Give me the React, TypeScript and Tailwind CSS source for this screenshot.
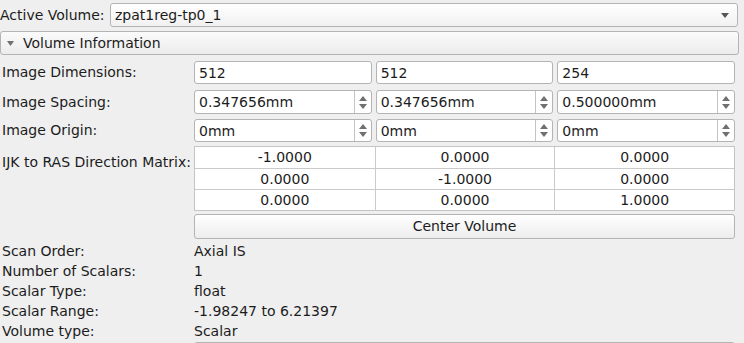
import React from 'react';

const SpinArrows = () => (
	<div className="flex h-full w-[17px] flex-col items-center justify-center gap-[3px] border-l border-[#c4c4c4]">
		<svg width="8" height="5" viewBox="0 0 8 5">
			<path d="M0 5 L4 0 L8 5 Z" fill="#707070" />
		</svg>
		<svg width="8" height="5" viewBox="0 0 8 5">
			<path d="M0 0 L4 5 L8 0 Z" fill="#707070" />
		</svg>
	</div>
);

const Field = ({ value, spin }: { value: string; spin?: boolean }) => (
	<div className="flex h-full flex-1 items-center rounded-[3px] border border-[#b4b4b4] bg-white">
		<span className="flex-1 pl-[4px] leading-none">{value}</span>
		{spin && <SpinArrows />}
	</div>
);

const FieldRow = ({
	label,
	values,
	spin,
	className,
}: {
	label: string;
	values: string[];
	spin?: boolean;
	className: string;
}) => (
	<div className={`flex items-center ${className}`}>
		<div className="w-[192px] shrink-0 whitespace-nowrap">{label}</div>
		<div className="flex h-full flex-1 gap-[4px]">
			{values.map((v, i) => (
				<Field key={i} value={v} spin={spin} />
			))}
		</div>
	</div>
);

const matrix = [
	['-1.0000', '0.0000', '0.0000'],
	['0.0000', '-1.0000', '0.0000'],
	['0.0000', '0.0000', '1.0000'],
];

const info = [
	['Scan Order:', 'Axial IS'],
	['Number of Scalars:', '1'],
	['Scalar Type:', 'float'],
	['Scalar Range:', '-1.98247 to 6.21397'],
	['Volume type:', 'Scalar'],
];

export default function App() {
	return (
		<div className="h-[343px] w-[744px] overflow-hidden bg-[#efefef] font-['DejaVu_Sans',sans-serif] text-[14px] text-[#1c1c1c]">
			<div className="mt-[3px] flex h-[24px] items-center pr-[6px]">
				<div className="w-[110px] shrink-0 whitespace-nowrap">Active Volume:</div>
				<div className="flex h-full flex-1 items-center rounded-[3px] border border-[#b4b4b4] bg-gradient-to-b from-white to-[#f1f1f1] pl-[4px] pr-[8px]">
					<span className="flex-1">zpat1reg-tp0_1</span>
					<svg width="8" height="5" viewBox="0 0 8 5">
						<path d="M0 0 L4 5 L8 0 Z" fill="#555" />
					</svg>
				</div>
			</div>

			<div className="mt-[4px] flex h-[24px] w-[739px] items-center rounded-[3px] border border-[#b4b4b4] bg-gradient-to-b from-[#fbfbfb] to-[#ececec] pl-[6px]">
				<svg width="7" height="5" viewBox="0 0 7 5">
					<path d="M0 0 L3.5 5 L7 0 Z" fill="#707070" />
				</svg>
				<span className="ml-[9px]">Volume Information</span>
			</div>

			<div className="pl-[2px] pr-[9px]">
				<FieldRow className="mt-[6px] h-[23px]" label="Image Dimensions:" values={['512', '512', '254']} />
				<FieldRow
					className="mt-[6px] h-[24px]"
					label="Image Spacing:"
					values={['0.347656mm', '0.347656mm', '0.500000mm']}
					spin
				/>
				<FieldRow className="mt-[5px] h-[23px]" label="Image Origin:" values={['0mm', '0mm', '0mm']} spin />

				<div className="mt-[4px] flex">
					<div className="w-[192px] shrink-0 whitespace-nowrap pt-[6px]">IJK to RAS Direction Matrix:</div>
					<div className="flex-1 border border-[#c4c4c4] bg-white">
						{matrix.map((row, r) => (
							<div key={r} className={`grid h-[21px] grid-cols-3 ${r > 0 ? 'border-t border-[#cacaca]' : ''}`}>
								{row.map((v, c) => (
									<div
										key={c}
										className={`flex items-center justify-center ${c > 0 ? 'border-l border-[#cacaca]' : ''}`}
									>
										{v}
									</div>
								))}
							</div>
						))}
					</div>
				</div>

				<div className="mt-[3px] flex">
					<div className="w-[192px] shrink-0" />
					<div className="flex h-[25px] flex-1 items-center justify-center rounded-[3px] border border-[#b4b4b4] bg-gradient-to-b from-white to-[#ededed]">
						Center Volume
					</div>
				</div>

				<div className="mt-[2px]">
					{info.map(([k, v]) => (
						<div key={k} className="flex h-[20px] items-center">
							<div className="w-[192px] shrink-0">{k}</div>
							<div>{v}</div>
						</div>
					))}
				</div>

				<div className="mt-[1px] flex">
					<div className="w-[192px] shrink-0" />
					<div className="h-[20px] flex-1 rounded-t-[3px] border border-[#b4b4b4] bg-gradient-to-b from-white to-[#ededed]" />
				</div>
			</div>
		</div>
	);
}
